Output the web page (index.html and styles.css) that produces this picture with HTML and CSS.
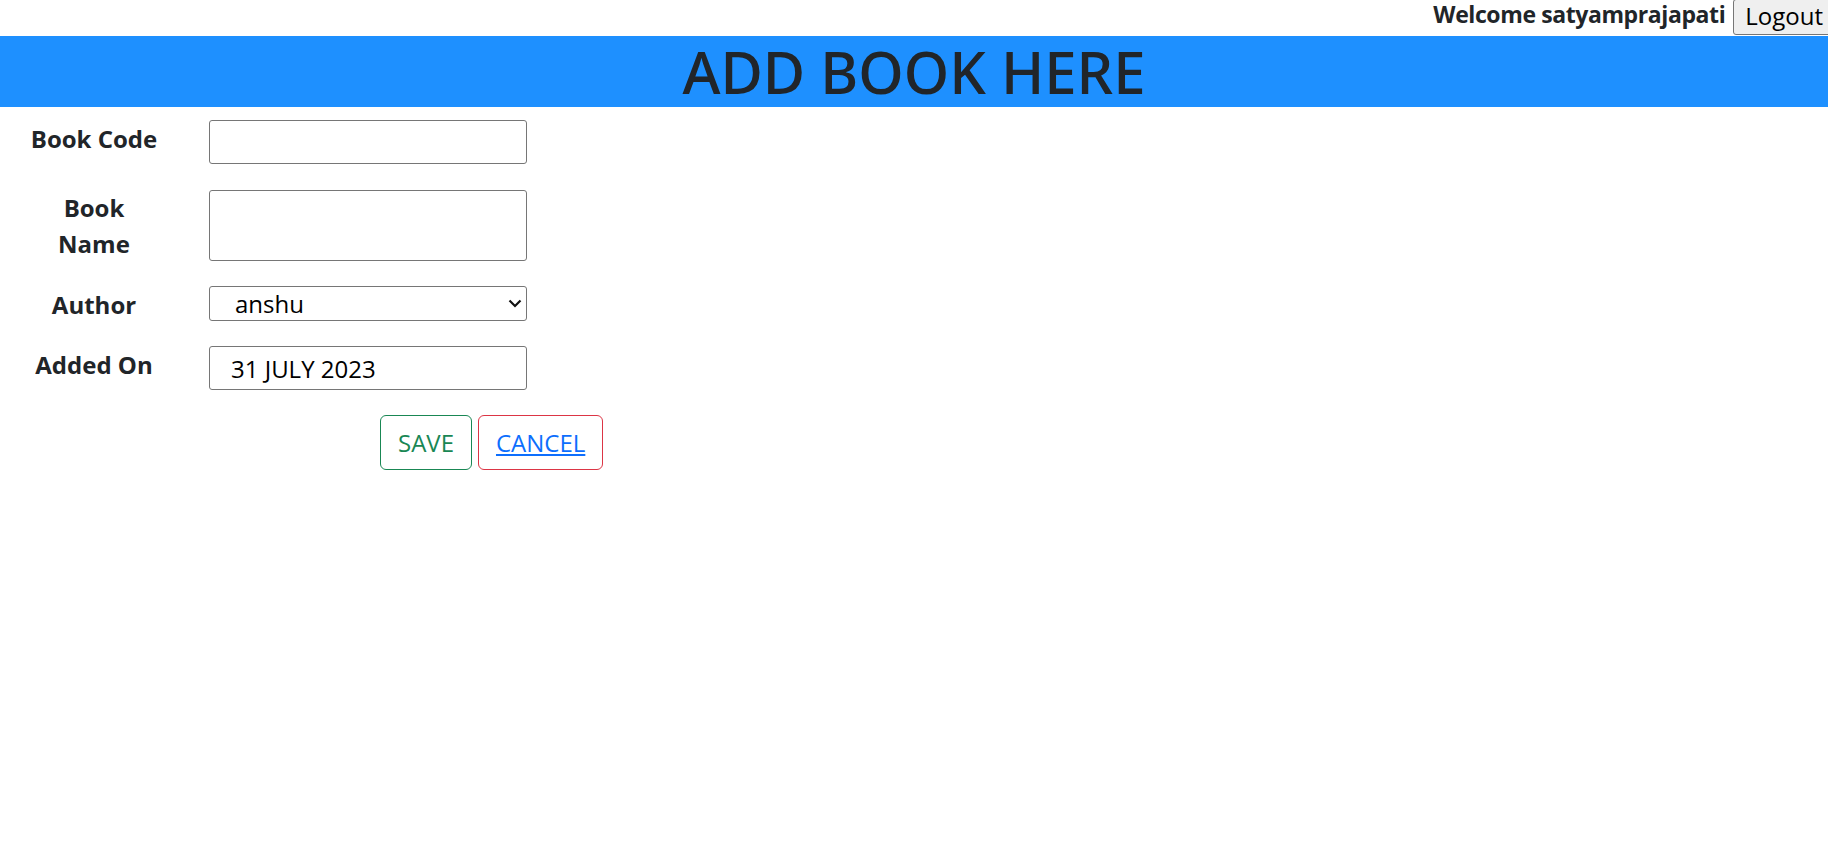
FILE: index.html
```html
<!DOCTYPE html>
<html lang="en">
<head>
<meta charset="utf-8">
<title>Add Book</title>
<link rel="stylesheet" href="styles.css">
</head>
<body>
<header class="topbar">
  <span class="welcome">Welcome satyamprajapati</span>
  <button class="logout" type="button">Logout</button>
</header>
<h1 class="title">ADD BOOK HERE</h1>
<form class="book-form">
  <label class="lbl">Book Code</label>
  <input class="field" type="text">
  <label class="lbl">Book<br>Name</label>
  <textarea class="field area"></textarea>
  <label class="lbl">Author</label>
  <div class="select-wrap">
    <select class="field sel"><option>anshu</option></select>
    <svg class="chev" width="14" height="9" viewBox="0 0 14 9"><path d="M1.5 1.5 L7 7 L12.5 1.5" fill="none" stroke="#111" stroke-width="2.2"/></svg>
  </div>
  <label class="lbl">Added On</label>
  <input class="field" type="text" value="31 JULY 2023">
  <div class="actions">
    <button class="btn save" type="button">SAVE</button>
    <a class="btn cancel" href="#">CANCEL</a>
  </div>
</form>
</body>
</html>
```
FILE: styles.css
```css
html, body {
  margin: 0;
  padding: 0;
  background: #fff;
}
body {
  font-family: "Open Sans", "Noto Sans", sans-serif;
  font-size: 24px;
  line-height: 1.5;
  color: #212529;
  overflow: hidden;
}
.topbar {
  display: flex;
  justify-content: flex-end;
  align-items: flex-start;
  height: 36px;
  gap: 8px;
  margin-right: -6px;
}
.welcome {
  font-weight: 700;
  font-size: 23px;
  letter-spacing: -0.4px;
  line-height: 29px;
}
.logout {
  font-family: inherit;
  font-size: 24px;
  line-height: 26px;
  color: #000;
  background: #efefef;
  border: 1px solid #767676;
  border-radius: 3px;
  padding: 3px 10px 5px 11px;
  margin-top: -1px;
  height: 36px;
}
.title {
  margin: 0;
  background: #1e90ff;
  color: #212529;
  font-family: "Noto Sans", "Open Sans", sans-serif;
  font-size: 58px;
  font-weight: 500;
  line-height: 71px;
  text-align: center;
}
.book-form {
  display: grid;
  grid-template-columns: 188px 318px;
  grid-template-rows: 44px 72px 35px 44px 55px;
  column-gap: 21px;
  row-gap: 25px;
  align-items: center;
  margin-top: 13px;
}
.lbl {
  font-weight: 700;
  text-align: center;
  line-height: 36px;
  align-self: start;
  margin-top: 1px;
}
.field {
  box-sizing: border-box;
  width: 318px;
  height: 44px;
  border: 1px solid #767676;
  border-radius: 3px;
  font-family: inherit;
  font-size: 24px;
  color: #000;
  padding: 0 21px;
  background: #fff;
  margin: 0;
}
.area {
  height: 71px;
  resize: none;
  display: block;
}
.select-wrap {
  position: relative;
  width: 318px;
  height: 35px;
}
.sel {
  height: 35px;
  padding: 0 0 0 25px;
  line-height: 33px;
  appearance: none;
  -webkit-appearance: none;
}
.chev {
  position: absolute;
  right: 5px;
  top: 13px;
  pointer-events: none;
}
.actions {
  grid-column: 1 / -1;
  display: flex;
  gap: 6px;
  padding-left: 380px;
}
.btn {
  box-sizing: border-box;
  height: 55px;
  padding: 9px 17px;
  line-height: 35px;
  font-family: inherit;
  font-size: 24px;
  border-radius: 6px;
  background: transparent;
  display: inline-block;
}
.save {
  color: #198754;
  border: 1px solid #198754;
}
.cancel {
  color: #0d6efd;
  border: 1px solid #dc3545;
  text-decoration: underline;
}
```
